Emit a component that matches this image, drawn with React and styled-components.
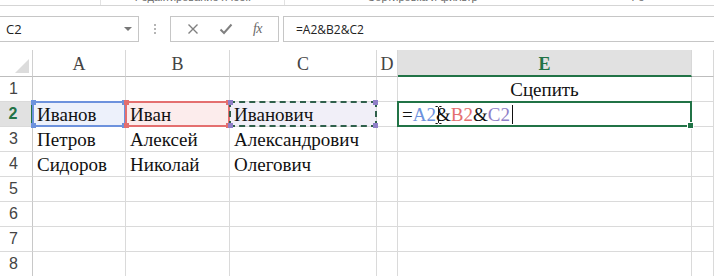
import React from "react"
import styled, { createGlobalStyle } from "styled-components"

const GlobalStyle = createGlobalStyle`
  html, body {
    margin: 0;
    padding: 0;
    background: #fff;
  }
  body {
    width: 714px;
    height: 276px;
    overflow: hidden;
    font-family: "Liberation Sans", Arial, sans-serif;
  }
`

const GREEN = "#217346"
const GRID = "#dadada"

const Ribbon = styled.div`
  height: 5px;
  border-bottom: 1px solid #d5d5d5;
  display: flex;
  overflow: hidden;
`

const RibbonGroup = styled.div`
  width: ${(p) => p.$w}px;
  flex-shrink: 0;
  border-left: ${(p) => (p.$sep ? "1px solid #e2e2e2" : "none")};
  text-align: center;
  font-size: 11px;
  line-height: 11px;
  color: #6a6a6a;
  margin-top: -8px;
  white-space: nowrap;
`

const FormulaBar = styled.div`
  height: 44px;
  display: flex;
  align-items: flex-start;
  padding-top: 10px;
  box-sizing: border-box;
`

const NameBox = styled.div`
  width: 140px;
  height: 26px;
  margin-left: -1px;
  box-sizing: border-box;
  border: 1px solid #c6c6c6;
  display: flex;
  align-items: center;
  justify-content: space-between;
  padding: 0 6px 0 6px;
  font-family: "Open Sans", "Noto Sans", sans-serif;
  font-size: 13px;
  color: #222;
`

const Caret = styled.span`
  width: 0;
  height: 0;
  border-left: 4px solid transparent;
  border-right: 4px solid transparent;
  border-top: 4px solid #777;
`

const Grip = styled.div`
  width: 31px;
  height: 26px;
  display: flex;
  flex-direction: column;
  align-items: center;
  justify-content: center;
  gap: 2px;

  span {
    width: 2px;
    height: 2px;
    background: #b5b5b5;
  }
`

const Buttons = styled.div`
  width: 109px;
  height: 26px;
  box-sizing: border-box;
  border: 1px solid #c6c6c6;
  display: flex;
  align-items: center;
  justify-content: space-around;
  padding: 0 6px;
  color: #7a7a7a;
`

const Fx = styled.span`
  font-family: "Liberation Serif", "Times New Roman", serif;
  font-style: italic;
  font-size: 14px;
  color: #6a6a6a;
  letter-spacing: -0.5px;
`

const FormulaInput = styled.div`
  flex: 1;
  height: 26px;
  margin-left: 4px;
  margin-right: -1px;
  box-sizing: border-box;
  border: 1px solid #c6c6c6;
  display: flex;
  align-items: center;
  padding-left: 12px;
  font-family: "Open Sans", "Noto Sans", sans-serif;
  font-size: 12px;
  color: #222;
`

const Sheet = styled.div`
  display: grid;
  grid-template-columns: 33px 93px 104px 147px 21px 294px 1fr;
  grid-template-rows: 27px repeat(8, 25px);
`

const Corner = styled.div`
  border-right: 1px solid #d0d0d0;
  border-bottom: 1px solid #bdbdbd;
  box-sizing: border-box;
  position: relative;

  &::after {
    content: "";
    position: absolute;
    right: 3px;
    bottom: 3px;
    width: 0;
    height: 0;
    border-left: 14px solid transparent;
    border-bottom: 14px solid #dcdcdc;
  }
`

const ColHead = styled.div`
  box-sizing: border-box;
  border-right: 1px solid #d8d8d8;
  border-bottom: ${(p) => (p.$active ? `2px solid ${GREEN}` : "1px solid #bdbdbd")};
  background: ${(p) => (p.$active ? "#e1e1e1" : "#fff")};
  color: ${(p) => (p.$active ? GREEN : "#444")};
  font-weight: ${(p) => (p.$active ? 700 : 400)};
  font-family: "Liberation Serif", "Times New Roman", serif;
  font-size: 18px;
  display: flex;
  align-items: center;
  justify-content: center;
  padding-top: 3px;
`

const RowHead = styled.div`
  box-sizing: border-box;
  border-right: ${(p) => (p.$active ? `2px solid ${GREEN}` : "1px solid #c8c8c8")};
  border-bottom: 1px solid ${GRID};
  background: ${(p) => (p.$active ? "#e1e1e1" : "#fff")};
  color: ${(p) => (p.$active ? GREEN : "#444")};
  font-weight: ${(p) => (p.$active ? 700 : 400)};
  font-family: "Liberation Sans Narrow", "Liberation Sans", sans-serif;
  font-size: 16px;
  display: flex;
  align-items: center;
  justify-content: center;
  padding-right: 5px;
`

const Cell = styled.div`
  position: relative;
  box-sizing: border-box;
  border-right: 1px solid ${GRID};
  border-bottom: 1px solid ${GRID};
  background: ${(p) => p.$tint || "#fff"};
  font-family: "Liberation Serif", "Times New Roman", serif;
  font-size: 19px;
  line-height: 20px;
  color: #111;
  display: flex;
  align-items: flex-end;
  justify-content: ${(p) => (p.$center ? "center" : "flex-start")};
  padding: 0 4px 1px 4px;
  white-space: nowrap;
  overflow: visible;
`

const RefBox = styled.div`
  position: absolute;
  inset: -1px -1px -1px -1px;
  border: 2px ${(p) => (p.$dashed ? "dashed" : "solid")} ${(p) => p.$line};
  pointer-events: none;
  z-index: 2;
`

const Handle = styled.span`
  position: absolute;
  width: 5px;
  height: 5px;
  background: ${(p) => p.$color};
  ${(p) => (p.$top ? "top: -3px;" : "bottom: -3px;")}
  ${(p) => (p.$left ? "left: -3px;" : "right: -3px;")}
`

const ActiveBox = styled.div`
  position: absolute;
  inset: -1px -1px -1px -1px;
  border: 2px solid ${GREEN};
  pointer-events: none;
  z-index: 3;
`

const FillHandle = styled.span`
  position: absolute;
  right: -4px;
  bottom: -4px;
  width: 5px;
  height: 5px;
  background: ${GREEN};
  border: 1px solid #fff;
`

const Formula = styled.span`
  position: relative;
  display: inline-flex;
  align-items: flex-end;
`

const Ref = styled.span`
  color: ${(p) => p.$color};
`

const TextCaret = styled.span`
  display: inline-block;
  width: 1px;
  height: 19px;
  background: #111;
  margin-left: 2px;
  margin-bottom: 1px;
`

const Mouse = styled.svg`
  position: absolute;
  left: 33px;
  bottom: 1px;
`

const BLUE = "#6d92dd"
const RED = "#e46f6f"
const PURPLE = "#8f7fc8"

const RefCell = ({ line, handle, dashed, tint, children }) => (
  <Cell $tint={tint}>
    {children}
    <RefBox $line={line} $dashed={dashed}>
      <Handle $color={handle} $top $left />
      <Handle $color={handle} $top />
      <Handle $color={handle} $left />
      <Handle $color={handle} />
    </RefBox>
  </Cell>
)

const rows = [
  ["Петров", "Алексей", "Александрович"],
  ["Сидоров", "Николай", "Олегович"],
]

const App = () => {
  return (
    <>
      <GlobalStyle />
      <Ribbon>
        <RibbonGroup $w={100} />
        <RibbonGroup $w={183} $sep>Редактирование ячеек</RibbonGroup>
        <RibbonGroup $w={275} $sep>Сортировка и фильтр</RibbonGroup>
        <RibbonGroup $w={156}>Ре</RibbonGroup>
      </Ribbon>
      <FormulaBar>
        <NameBox>
          C2
          <Caret />
        </NameBox>
        <Grip>
          <span />
          <span />
          <span />
        </Grip>
        <Buttons>
          <svg width="12" height="12" viewBox="0 0 12 12">
            <path d="M1.5 1.5 L10.5 10.5 M10.5 1.5 L1.5 10.5" stroke="#808080" strokeWidth="1.4" fill="none" />
          </svg>
          <svg width="14" height="12" viewBox="0 0 14 12">
            <path d="M1.5 6.5 L5 10 L12.5 1.5" stroke="#808080" strokeWidth="2" fill="none" />
          </svg>
          <Fx>fx</Fx>
        </Buttons>
        <FormulaInput>=A2&amp;B2&amp;C2</FormulaInput>
      </FormulaBar>
      <Sheet>
        <Corner />
        <ColHead>A</ColHead>
        <ColHead>B</ColHead>
        <ColHead>C</ColHead>
        <ColHead>D</ColHead>
        <ColHead $active>E</ColHead>
        <ColHead />

        <RowHead>1</RowHead>
        <Cell />
        <Cell />
        <Cell />
        <Cell />
        <Cell $center>Сцепить</Cell>
        <Cell />

        <RowHead $active>2</RowHead>
        <RefCell line={BLUE} handle={BLUE} tint="#edf1fb">Иванов</RefCell>
        <RefCell line={RED} handle={RED} tint="#fcecec">Иван</RefCell>
        <RefCell line="#2f5f4b" handle={PURPLE} dashed tint="#f1eff8">Иванович</RefCell>
        <Cell />
        <Cell>
          <Formula>
            =<Ref $color={BLUE}>A2</Ref>&amp;<Ref $color={RED}>B2</Ref>&amp;<Ref $color={PURPLE}>C2</Ref>
            <TextCaret />
            <Mouse width="7" height="18" viewBox="0 0 7 18">
              <path d="M0.5 0.5 H2.5 L3.5 1.5 L4.5 0.5 H6.5 M3.5 1.5 V16.5 M0.5 17.5 H2.5 L3.5 16.5 L4.5 17.5 H6.5" stroke="#111" strokeWidth="1" fill="none" />
            </Mouse>
          </Formula>
          <ActiveBox>
            <FillHandle />
          </ActiveBox>
        </Cell>
        <Cell />

        {rows.map((r, i) => (
          <React.Fragment key={i}>
            <RowHead>{i + 3}</RowHead>
            {r.map((v) => (
              <Cell key={v}>{v}</Cell>
            ))}
            <Cell />
            <Cell />
            <Cell />
          </React.Fragment>
        ))}

        {[5, 6, 7, 8].map((n) => (
          <React.Fragment key={n}>
            <RowHead>{n}</RowHead>
            <Cell />
            <Cell />
            <Cell />
            <Cell />
            <Cell />
            <Cell />
          </React.Fragment>
        ))}
      </Sheet>
    </>
  )
}

export default App
